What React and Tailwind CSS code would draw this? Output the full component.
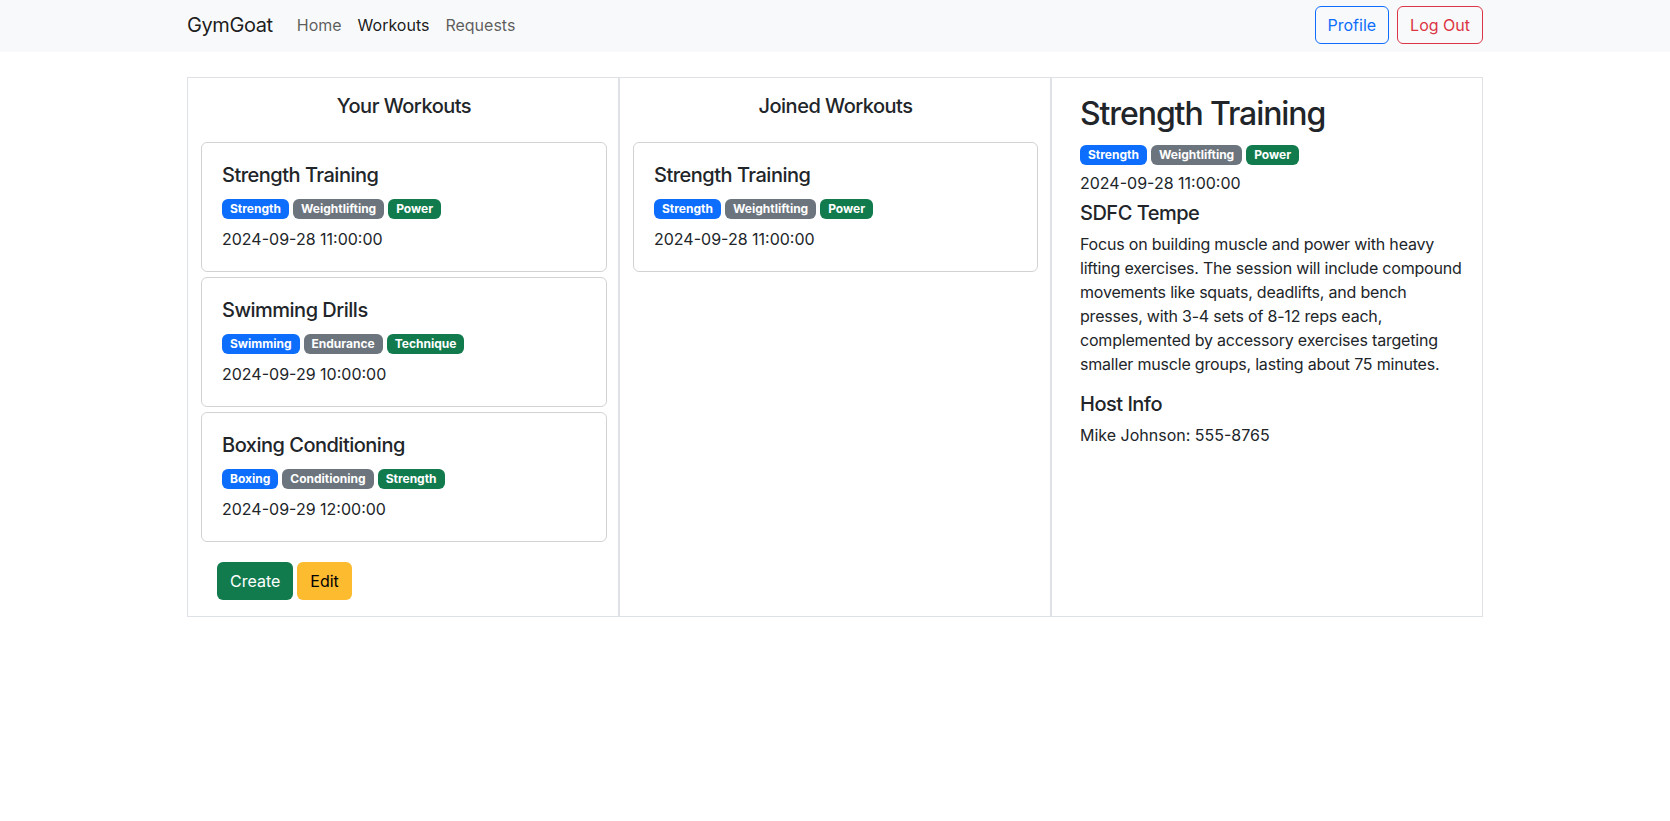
import React from 'react';

const tagColors = ['bg-[#0d6efd]', 'bg-[#6c757d]', 'bg-[#127b4e]'];

const workouts = [
    { title: 'Strength Training', tags: ['Strength', 'Weightlifting', 'Power'], date: '2024-09-28 11:00:00' },
    { title: 'Swimming Drills', tags: ['Swimming', 'Endurance', 'Technique'], date: '2024-09-29 10:00:00' },
    { title: 'Boxing Conditioning', tags: ['Boxing', 'Conditioning', 'Strength'], date: '2024-09-29 12:00:00' },
];

const Badges = ({ tags }) => (
    <div className="flex gap-1">
        {tags.map((t, i) => (
            <span key={t} className={`${tagColors[i]} text-white text-[12px] font-bold leading-none px-[8px] py-[4px] rounded-md`}>{t}</span>
        ))}
    </div>
);

const WorkoutCard = ({ w }) => (
    <div className="border border-black/[.175] rounded-md p-5">
        <h5 className="text-xl leading-6 font-medium tracking-[-0.5px] mb-3">{w.title}</h5>
        <Badges tags={w.tags} />
        <div className="mt-2 leading-6">{w.date}</div>
    </div>
);

export default function App() {
    return (
        <div className="min-h-[821px] bg-white text-[#212529] font-['Inter','Liberation_Sans',sans-serif] text-base">
            <nav className="bg-[#f8f9fa] pt-1.5 pb-2">
                <div className="w-[1320px] mx-auto px-3 flex items-center justify-between">
                    <div className="flex items-center">
                        <span className="text-xl leading-[30px] tracking-[-0.4px] text-black/90 mr-4">GymGoat</span>
                        <a className="px-2 leading-6 text-black/65">Home</a>
                        <a className="px-2 leading-6 text-black/90">Workouts</a>
                        <a className="px-2 leading-6 text-black/65">Requests</a>
                    </div>
                    <div className="flex gap-2">
                        <button className="border border-[#0d6efd] text-[#0d6efd] rounded-md px-3 py-1.5 leading-6">Profile</button>
                        <button className="border border-[#dc3545] text-[#dc3545] rounded-md px-3 py-1.5 leading-6">Log Out</button>
                    </div>
                </div>
            </nav>

            <div className="w-[1320px] mx-auto px-3 mt-[25px]">
                <div className="grid grid-cols-3">
                    <div className="border border-[#dee2e6] pl-[13px] pr-[11px]">
                        <h5 className="text-xl leading-6 font-medium tracking-[-0.5px] text-center pt-4 mb-6">Your Workouts</h5>
                        <div className="flex flex-col gap-[5px]">
                            {workouts.map(w => <WorkoutCard key={w.title} w={w} />)}
                        </div>
                        <div className="flex gap-1 mt-5 ml-4 mb-4">
                            <button className="bg-[#127b4e] text-white rounded-md px-3 py-1.5 leading-6 border border-transparent">Create</button>
                            <button className="bg-[#fdbb30] text-black rounded-md px-3 py-1.5 leading-6 border border-transparent">Edit</button>
                        </div>
                    </div>

                    <div className="border border-[#dee2e6] pl-[13px] pr-[12px]">
                        <h5 className="text-xl leading-6 font-medium tracking-[-0.5px] text-center pt-4 mb-6">Joined Workouts</h5>
                        <WorkoutCard w={workouts[0]} />
                    </div>

                    <div className="border border-[#dee2e6] pl-7 pr-[14px] pt-[17px]">
                        <h2 className="text-[32px] leading-[38px] font-medium tracking-[-1.1px] mb-3">Strength Training</h2>
                        <Badges tags={workouts[0].tags} />
                        <div className="mt-1.5 leading-6">2024-09-28 11:00:00</div>
                        <h5 className="text-xl leading-6 font-medium tracking-[-0.5px] mt-1.5">SDFC Tempe</h5>
                        <p className="mt-[7px] leading-6 tracking-[-0.2px]">
                            Focus on building muscle and power with heavy lifting exercises. The session will include compound movements like squats, deadlifts, and bench presses, with 3-4 sets of 8-12 reps each, complemented by accessory exercises targeting smaller muscle groups, lasting about 75 minutes.
                        </p>
                        <h5 className="text-xl leading-6 font-medium tracking-[-0.5px] mt-4">Host Info</h5>
                        <p className="mt-[7px] leading-6">Mike Johnson: 555-8765</p>
                    </div>
                </div>
            </div>
        </div>
    );
}
